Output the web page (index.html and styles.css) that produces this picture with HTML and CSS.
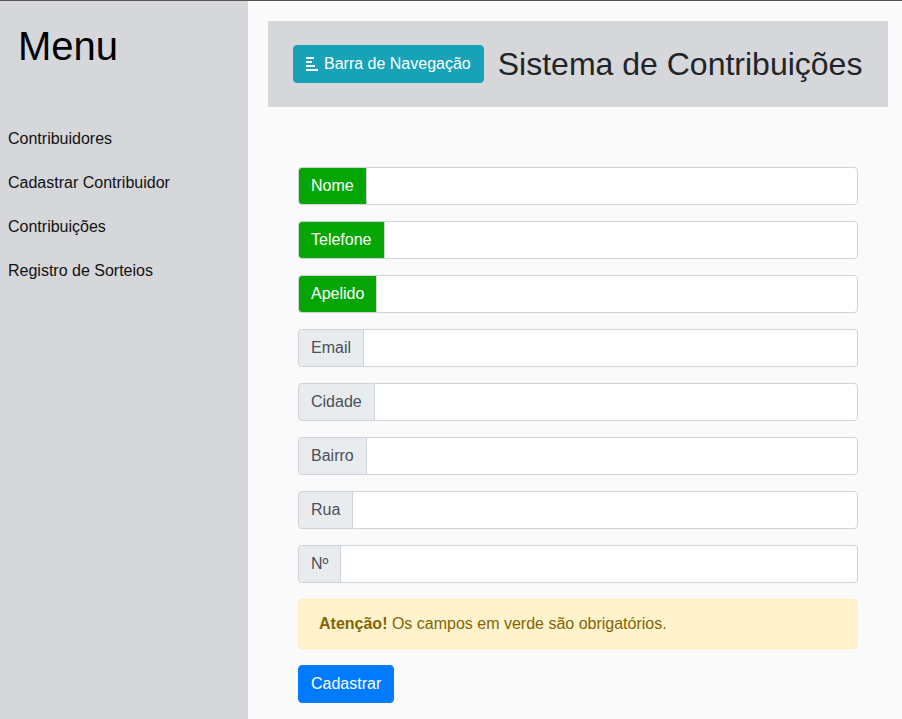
FILE: index.html
```html
<!DOCTYPE html>
<html lang="pt-BR">
<head>
<meta charset="utf-8">
<title>Sistema de Contribuições</title>
<link rel="stylesheet" href="styles.css">
</head>
<body>
<div class="page">
  <aside class="sidebar">
    <h1 class="menu-title">Menu</h1>
    <nav class="menu">
      <a href="#">Contribuidores</a>
      <a href="#">Cadastrar Contribuidor</a>
      <a href="#">Contribuições</a>
      <a href="#">Registro de Sorteios</a>
    </nav>
  </aside>
  <main class="main">
    <header class="topbar">
      <button class="nav-btn" type="button">
        <svg class="nav-icon" width="14" height="16" viewBox="0 0 14 16" aria-hidden="true">
          <rect x="0" y="1" width="8" height="2" fill="#fff"/>
          <rect x="0" y="5" width="6" height="2" fill="#fff"/>
          <rect x="0" y="9" width="9" height="2" fill="#fff"/>
          <rect x="0" y="13" width="12" height="2" fill="#fff"/>
        </svg>
        <span>Barra de Navegação</span>
      </button>
      <h2 class="title">Sistema de Contribuições</h2>
    </header>
    <form class="form">
      <div class="group"><span class="label req">Nome</span><input class="field" type="text"></div>
      <div class="group"><span class="label req">Telefone</span><input class="field" type="text"></div>
      <div class="group"><span class="label req">Apelido</span><input class="field" type="text"></div>
      <div class="group"><span class="label">Email</span><input class="field" type="text"></div>
      <div class="group"><span class="label">Cidade</span><input class="field" type="text"></div>
      <div class="group"><span class="label">Bairro</span><input class="field" type="text"></div>
      <div class="group"><span class="label">Rua</span><input class="field" type="text"></div>
      <div class="group"><span class="label">Nº</span><input class="field" type="text"></div>
      <div class="alert"><strong>Atenção!</strong> Os campos em verde são obrigatórios.</div>
      <button class="submit" type="button">Cadastrar</button>
    </form>
  </main>
</div>
</body>
</html>
```
FILE: styles.css
```css
* { box-sizing: border-box; }
html, body { margin: 0; padding: 0; }
body {
  font-family: "Liberation Sans", Arial, sans-serif;
  font-size: 16px;
  line-height: 1.5;
  color: #212529;
  border-top: 1px solid #555;
  background: #fafafa;
}
.page {
  display: flex;
  min-height: 718px;
}
.sidebar {
  width: 248px;
  flex: 0 0 248px;
  background: #d6d7db;
}
.menu-title {
  margin: 21px 0 0 18px;
  font-size: 40px;
  font-weight: 400;
  line-height: 48px;
  color: #000;
}
.menu {
  display: flex;
  flex-direction: column;
  margin-top: 47px;
}
.menu a {
  display: block;
  padding: 10px 8px;
  line-height: 24px;
  color: #111;
  text-decoration: none;
}
.main {
  flex: 1;
  min-width: 0;
  background: #fafafa;
  padding: 20px 14px 0 20px;
}
.topbar {
  display: flex;
  align-items: center;
  height: 86px;
  padding: 0 25px;
  background: #d6d7db;
}
.nav-btn {
  display: flex;
  flex-shrink: 0;
  align-items: center;
  gap: 4px;
  height: 38px;
  padding: 6px 12px;
  border: 1px solid #17a2b8;
  border-radius: 4px;
  background: #17a2b8;
  color: #fff;
  font-family: inherit;
  font-size: 16px;
  line-height: 24px;
  white-space: nowrap;
}
.nav-icon { display: block; flex-shrink: 0; }
.title {
  margin: 0 0 0 14px;
  font-size: 32px;
  font-weight: 400;
  line-height: 1.2;
  color: #212529;
  white-space: nowrap;
}
.form {
  margin: 60px 30px 0 30px;
}
.group {
  display: flex;
  height: 38px;
  margin-bottom: 16px;
}
.label {
  display: flex;
  align-items: center;
  padding: 6px 12px;
  background: #e9ecef;
  color: #495057;
  border: 1px solid #ced4da;
  border-radius: 4px 0 0 4px;
  line-height: 24px;
  white-space: nowrap;
}
.label.req {
  background: #06a506;
  color: #fff;
}
.field {
  flex: 1;
  min-width: 0;
  height: 38px;
  margin-left: -1px;
  border: 1px solid #ced4da;
  border-radius: 0 4px 4px 0;
  background: #fff;
  font-family: inherit;
  font-size: 16px;
  padding: 6px 12px;
}
.alert {
  padding: 12px 20px;
  margin-bottom: 16px;
  background: #fff3cd;
  border: 1px solid #ffeeba;
  border-radius: 4px;
  color: #856404;
  line-height: 24px;
}
.alert strong { font-weight: 700; }
.submit {
  height: 38px;
  padding: 6px 12px;
  border: 1px solid #007bff;
  border-radius: 4px;
  background: #007bff;
  color: #fff;
  font-family: inherit;
  font-size: 16px;
  line-height: 24px;
}
```
